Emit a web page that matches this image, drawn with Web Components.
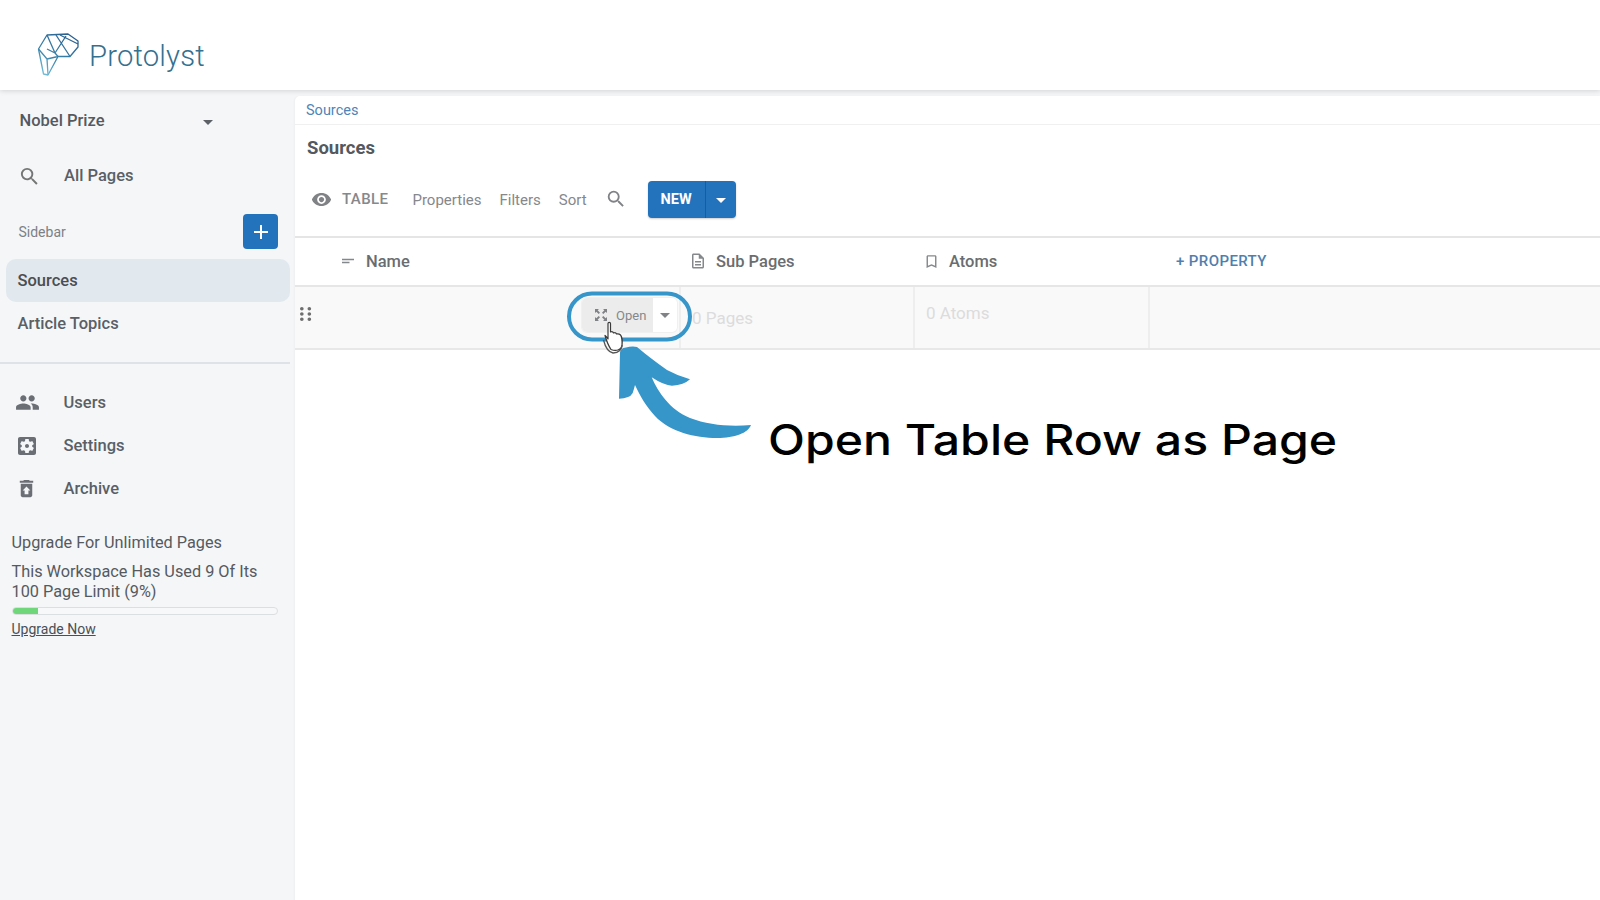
<!DOCTYPE html>
<html lang="en"><head><meta charset="utf-8"><title>Protolyst</title>
<style>
html,body{margin:0;padding:0;background:#fff;font-family:Roboto,"Liberation Sans",sans-serif;overflow:hidden}
</style></head><body>
<app-shell>
  <app-header slot="header"></app-header>
  <side-bar slot="side"></side-bar>
  <main-panel slot="main"></main-panel>
  <tutorial-overlay slot="overlay"></tutorial-overlay>
</app-shell>
<script>
const ICONS={
search:'M15.5 14h-.79l-.28-.27A6.471 6.471 0 0 0 16 9.5 6.5 6.5 0 1 0 9.5 16c1.61 0 3.09-.59 4.23-1.57l.27.28v.79l5 4.99L20.49 19l-4.99-5zm-6 0C7.01 14 5 11.99 5 9.5S7.01 5 9.5 5 14 7.01 14 9.5 11.99 14 9.5 14z',
people:'M16 11c1.66 0 2.99-1.34 2.99-3S17.66 5 16 5c-1.66 0-3 1.34-3 3s1.34 3 3 3zm-8 0c1.66 0 2.99-1.34 2.99-3S9.66 5 8 5C6.34 5 5 6.34 5 8s1.34 3 3 3zm0 2c-2.33 0-7 1.17-7 3.5V19h14v-2.5c0-2.33-4.67-3.5-7-3.5zm8 0c-.29 0-.62.02-.97.05 1.16.84 1.97 1.97 1.97 3.45V19h6v-2.5c0-2.33-4.67-3.5-7-3.5z',
settings:'M12 10c-1.1 0-2 .9-2 2s.9 2 2 2 2-.9 2-2-.9-2-2-2zm7-7H5c-1.11 0-2 .9-2 2v14c0 1.1.89 2 2 2h14c1.11 0 2-.9 2-2V5c0-1.1-.89-2-2-2zm-1.75 9c0 .23-.02.46-.05.68l1.48 1.16c.13.11.17.3.08.45l-1.4 2.42c-.09.15-.27.21-.43.15l-1.74-.7c-.36.28-.76.51-1.18.69l-.26 1.85c-.03.17-.18.3-.35.3h-2.8c-.17 0-.32-.13-.35-.29l-.26-1.85c-.43-.18-.82-.41-1.18-.69l-1.74.7c-.16.06-.34 0-.43-.15l-1.4-2.42c-.09-.15-.05-.34.08-.45l1.48-1.16c-.03-.23-.05-.46-.05-.69 0-.23.02-.46.05-.68l-1.48-1.16c-.13-.11-.17-.3-.08-.45l1.4-2.42c.09-.15.27-.21.43-.15l1.74.7c.36-.28.76-.51 1.18-.69l.26-1.85c.03-.17.18-.3.35-.3h2.8c.17 0 .32.13.35.29l.26 1.85c.43.18.82.41 1.18.69l1.74-.7c.16-.06.34 0 .43.15l1.4 2.42c.09.15.05.34-.08.45l-1.48 1.16c.03.23.05.46.05.69z',
trash:'M19 4h-3.5l-1-1h-5l-1 1H5v2h14zM6 7v12c0 1.1.9 2 2 2h8c1.1 0 2-.9 2-2V7H6zm8 7v4h-4v-4H8l4-4 4 4h-2z',
eye:'M12 4.5C7 4.5 2.73 7.61 1 12c1.73 4.39 6 7.5 11 7.5s9.27-3.11 11-7.5c-1.73-4.39-6-7.5-11-7.5zM12 17c-2.76 0-5-2.24-5-5s2.24-5 5-5 5 2.24 5 5-2.24 5-5 5zm0-8c-1.66 0-3 1.34-3 3s1.34 3 3 3 3-1.34 3-3-1.34-3-3-3z',
short:'M4 9h16v2H4zm0 4h10v2H4z',
doc:'M8 16h8v2H8zm0-4h8v2H8zm6-10H6c-1.1 0-2 .9-2 2v16c0 1.1.89 2 1.99 2H18c1.1 0 2-.9 2-2V8l-6-6zm4 18H6V4h7v5h5v11z',
bookmark:'M17 3H7c-1.1 0-1.99.9-1.99 2L5 21l7-3 7 3V5c0-1.1-.9-2-2-2zm0 15l-5-2.18L7 18V5h10v13z',
caret:'M7 10l5 5 5-5z',
plus:'M19 13h-6v6h-2v-6H5v-2h6V5h2v6h6v2z',
expand:'M3 3h6L7 5l3.5 3.5-2 2L5 7 3 9zM21 3v6l-2-2-3.5 3.5-2-2L17 5l-2-2zM3 21v-6l2 2 3.5-3.5 2 2L7 19l2 2zM21 21h-6l2-2-3.5-3.5 2-2L19 17l2-2z',
dots:'M7 3.5a2.2 2.2 0 1 0 0 4.4 2.2 2.2 0 0 0 0-4.4zm9 0a2.2 2.2 0 1 0 0 4.4 2.2 2.2 0 0 0 0-4.4zM7 9.8a2.2 2.2 0 1 0 0 4.4 2.2 2.2 0 0 0 0-4.4zm9 0a2.2 2.2 0 1 0 0 4.4 2.2 2.2 0 0 0 0-4.4zM7 16.1a2.2 2.2 0 1 0 0 4.4 2.2 2.2 0 0 0 0-4.4zm9 0a2.2 2.2 0 1 0 0 4.4 2.2 2.2 0 0 0 0-4.4z'
};
function def(name,html){
  customElements.define(name,class extends HTMLElement{
    constructor(){super();this.attachShadow({mode:'open'}).innerHTML=html;}
  });
}
class MatIcon extends HTMLElement{
  connectedCallback(){
    if(this.shadowRoot)return;
    const s=this.getAttribute('size')||24,c=this.getAttribute('color')||'#757575';
    this.attachShadow({mode:'open'}).innerHTML=`<style>:host{display:inline-flex;flex:none;width:${s}px;height:${s}px}svg{display:block;width:100%;height:100%}</style><svg viewBox="0 0 24 24"><path fill="${c}" d="${ICONS[this.getAttribute('name')]}"/></svg>`;
  }
}
customElements.define('mat-icon',MatIcon);

def('app-shell',`<style>
:host{display:grid;grid-template-columns:295px 1fr;grid-template-rows:90px 810px;width:1600px;height:900px;position:relative;overflow:hidden;background:#f4f6f8}
.h{grid-column:1/3;position:relative;z-index:2}
</style>
<div class="h"><slot name="header"></slot></div><slot name="side"></slot><slot name="main"></slot><slot name="overlay"></slot>`);

def('app-header',`<style>
:host{display:flex;align-items:center;height:90px;background:#fff;box-shadow:0 1px 5px rgba(0,0,0,.14);padding:0 0 0 37px;box-sizing:border-box}
svg{display:block;width:44px;height:46px;margin-top:20px}
span{font:300 29.3px/36px Roboto,sans-serif;color:#34708f;margin:22px 0 0 8px;letter-spacing:.15px}
</style>
<svg viewBox="37 33 44 46" fill="none" stroke="url(#g)" stroke-width="1.3" stroke-linejoin="round">
<defs><linearGradient id="g" gradientUnits="userSpaceOnUse" x1="70" y1="36" x2="42" y2="76"><stop offset="0" stop-color="#2a5f8f"/><stop offset=".6" stop-color="#3c87ad"/><stop offset="1" stop-color="#79c0da"/></linearGradient></defs>
<path d="M38.500 50 47 36 68 35 78 42 78 48 70 57.500 58 57.500 48 76 43.500 75Z"/>
<path d="M47 36 55 54 58 57.500M38.500 50 47 60 58 57.500M47 60 48 76M55 54 66 37M56 36 70 57.500M60 36 78 45M55 54 47 50"/>
</svg><span>Protolyst</span>`);

def('side-row',`<style>
:host{display:flex;align-items:center;height:43px;color:#5a5f66;font:500 16.5px/20px Roboto,sans-serif}
.i{width:var(--icon-w,44px);display:flex;flex:none}
:host([plain]) .i{display:none}
:host([active]){background:#e1e8ee;border-radius:10px;color:#4a4e53}
</style><span class="i"><slot name="icon"></slot></span><slot></slot>`);

def('side-bar',`<style>
:host{display:block;background:#f4f6f8;font-family:Roboto,sans-serif}
.top{display:flex;align-items:center;justify-content:space-between;height:30px;margin:15px 75px 0 19.500px;color:#555a60;font:500 16.500px Roboto,sans-serif}
.top mat-icon{margin-top:3px}
.search{margin:20px 0 0 18px;height:42px;--icon-w:46px}
.lbl{display:flex;align-items:center;justify-content:space-between;height:35px;margin:17px 17px 0 18.500px;color:#7d8186;font:400 14px Roboto,sans-serif}
.plus{width:35px;height:35px;border-radius:4px;background:#2373bc;display:flex;align-items:center;justify-content:center}
.list{margin:10px 5px 0 6px}
.list side-row{padding-left:11.500px}
.rule{height:2px;background:#dfe2e6;margin:17px 5px 17px 0}
.nav{margin-left:15px;--icon-w:48.500px}
.up{margin:23px 0 0 11.500px;width:266px;color:#565a5f;font:400 16.300px/20px Roboto,sans-serif}
.up p{margin:0}
.up p+p{margin-top:9px}
.bar{height:8px;margin-top:5px;border:1px solid #dcdfe2;border-radius:5px;background:#f7f8f9;box-sizing:border-box;overflow:hidden}
.bar i{display:block;width:25px;height:100%;background:#6fd67a}
a{display:inline-block;margin-top:5px;font-size:14px;line-height:18px;color:#4b4f54;text-decoration:underline}
</style>
<div class="top"><span>Nobel Prize</span><mat-icon name="caret" size="24" color="#5d6167"></mat-icon></div>
<side-row class="search"><mat-icon slot="icon" name="search" size="23"></mat-icon>All Pages</side-row>
<div class="lbl"><span>Sidebar</span><span class="plus"><mat-icon name="plus" size="24" color="#fff"></mat-icon></span></div>
<div class="list"><side-row plain active>Sources</side-row><side-row plain>Article Topics</side-row></div>
<div class="rule"></div>
<div class="nav">
<side-row><mat-icon slot="icon" name="people" size="25" color="#6b6f75"></mat-icon>Users</side-row>
<side-row><mat-icon slot="icon" name="settings" size="24" color="#6b6f75"></mat-icon>Settings</side-row>
<side-row><mat-icon slot="icon" name="trash" size="23" color="#6b6f75"></mat-icon>Archive</side-row>
</div>
<div class="up"><p>Upgrade For Unlimited Pages</p><p>This Workspace Has Used 9 Of Its<br>100 Page Limit (9%)</p><div class="bar"><i></i></div><a>Upgrade Now</a></div>`);

def('tool-bar',`<style>
:host{display:flex;align-items:center;height:37px;margin-top:21px;padding-left:16px;color:#85888c;font:400 15px Roboto,sans-serif}
.t{font-weight:500;font-size:15px;letter-spacing:.4px;margin:-2px 0 0 10px}
.p{margin-left:24px}.f{margin-left:18px}.s{margin-left:18px}
mat-icon.q{margin:-2px 0 0 18px}
.new{display:flex;height:37px;margin-left:21px;border-radius:4px;background:#2373bc;color:#fff;font:700 14.500px Roboto,sans-serif;align-items:center;box-shadow:0 1px 2px rgba(0,0,0,.2)}
.new b{width:57px;text-align:center;font-weight:700;border-right:1px solid #1b5c97;line-height:37px}
.new span{width:30px;display:flex;justify-content:center}
</style>
<mat-icon name="eye" size="21" color="#808285"></mat-icon><span class="t">TABLE</span><span class="p">Properties</span><span class="f">Filters</span><span class="s">Sort</span><mat-icon class="q" name="search" size="22" color="#808285"></mat-icon>
<div class="new"><b>NEW</b><span><mat-icon name="caret" size="24" color="#fff"></mat-icon></span></div>`);

def('open-button',`<style>
:host{display:flex;width:95px;height:34px;border-radius:5px;overflow:hidden;background:#fff;box-shadow:0 0 0 1px #f0f0f0}
.l{width:71px;background:#ececec;display:flex;align-items:center;padding-left:11px;box-sizing:border-box;color:#85888b;font:400 13px Roboto,sans-serif}
.l span{margin-left:7px}
.r{flex:1;display:flex;align-items:center;justify-content:center}
</style><div class="l"><mat-icon name="expand" size="16" color="#808285"></mat-icon><span>Open</span></div><div class="r"><mat-icon name="caret" size="24" color="#808285"></mat-icon></div>`);

def('data-table',`<style>
:host{display:block;font-family:Roboto,sans-serif}
.row{display:grid;grid-template-columns:386px 234px 235px 1fr}
.head{height:47px;border-top:2px solid #e5e5e5;border-bottom:2px solid #e6e6e6;box-sizing:content-box;color:#6a6d70;font:500 16.500px Roboto,sans-serif}
.head>div{display:flex;align-items:center;padding-bottom:1px}
.n{padding-left:44px}.n span{margin-left:9px}
.sp{padding-left:8px}.sp span{margin-left:9px}
.at{padding-left:8px}.at span{margin-left:9px}
.pr{padding-left:26px;color:#4f7fae;font-size:15px;letter-spacing:.4px}
.body{height:61px;background:#f9f9f9;border-bottom:2px solid #e8e8e8;color:#dcdcdc;font:400 17px Roboto,sans-serif}
.body>div{border-right:2px solid #eeeeee;box-sizing:border-box}
.body>div:last-child{border:0}
.c1{display:flex;justify-content:space-between;padding:11px 2px 0 1px}
.c1 mat-icon{margin-top:6px}
.c2{display:flex;align-items:center;padding:0 0 0 11px}
.c3{display:flex;align-items:center;padding:0 0 10px 11px}
</style>
<div class="row head">
<div class="n"><mat-icon name="short" size="18" color="#85888b"></mat-icon><span>Name</span></div>
<div class="sp"><mat-icon name="doc" size="18" color="#85888b"></mat-icon><span>Sub Pages</span></div>
<div class="at"><mat-icon name="bookmark" size="17" color="#85888b"></mat-icon><span>Atoms</span></div>
<div class="pr">+ PROPERTY</div>
</div>
<div class="row body">
<div class="c1"><mat-icon name="dots" size="20" color="#6e6e6e"></mat-icon><open-button></open-button></div>
<div class="c2">0 Pages</div><div class="c3">0 Atoms</div><div></div>
</div>`);

def('main-panel',`<style>
:host{display:block;margin-top:6px;background:#fff;border-top-left-radius:5px;box-shadow:-1px 0 2px rgba(0,0,0,.03);overflow:hidden}
.crumb{height:28px;border-bottom:1px solid #f0f0f0;padding-left:11px;display:flex;align-items:center;color:#4f84b8;font:400 14.500px Roboto,sans-serif}
h1{margin:11px 0 0 12px;font:700 18.500px/24px Roboto,sans-serif;color:#55585c}
.gap{height:18px}
</style>
<div class="crumb">Sources</div><h1>Sources</h1><tool-bar></tool-bar><div class="gap"></div><data-table></data-table>`);

def('tutorial-overlay',`<style>
:host{position:absolute;inset:0;display:block;pointer-events:none}
svg{position:absolute;left:0;top:0;width:1600px;height:900px}
.cap{position:absolute;left:768px;top:410px;font:500 42px/60px Inter,"Open Sans",sans-serif;color:#000;white-space:nowrap;transform:scaleX(1.147);transform-origin:0 50%}
</style>
<svg viewBox="0 0 1600 900" fill="none">
<rect x="569" y="293.500" width="121" height="46" rx="23" stroke="#3695c9" stroke-width="4"/>
<path d="M620 353Q620 348 626 347.500Q632 346 637 347Q650 358 667 370Q678 376 690 379.300Q684 385 672 385.700Q664 385.500 651.700 377.300C658 392 670 410 690 418C708 425 730 427 751 425C748 433 735 438 717 438C695 438 670 432 655 416C646 406 640 396 635 385Q634 389 632.700 393Q631 396 628 397Q624 398.500 619 398.700Z" fill="#3695c9"/>
<path d="M608 323.500 608 339C607 337 606 336 605 335.500C606 339 608 345 611 349.500C616 351.500 621 350 622 346 622.500 341 621.500 336 620.500 335 619 333.500 617.500 334 616.500 334 616 332.500 615 332.500 613.500 333 613 331.500 612 331.500 610.500 332L610.500 323.500C610.500 322 608 322 608 323.500Z" fill="#fff" stroke="#3a3a3a" stroke-width="1.200" stroke-linejoin="round"/>
<path d="M603.500 340C605 346 608 352 613 353 619 353 622 349 622 345" stroke="#555" stroke-width="1.300"/>
</svg>
<div class="cap">Open Table Row as Page</div>`);
</script>
</body></html>
